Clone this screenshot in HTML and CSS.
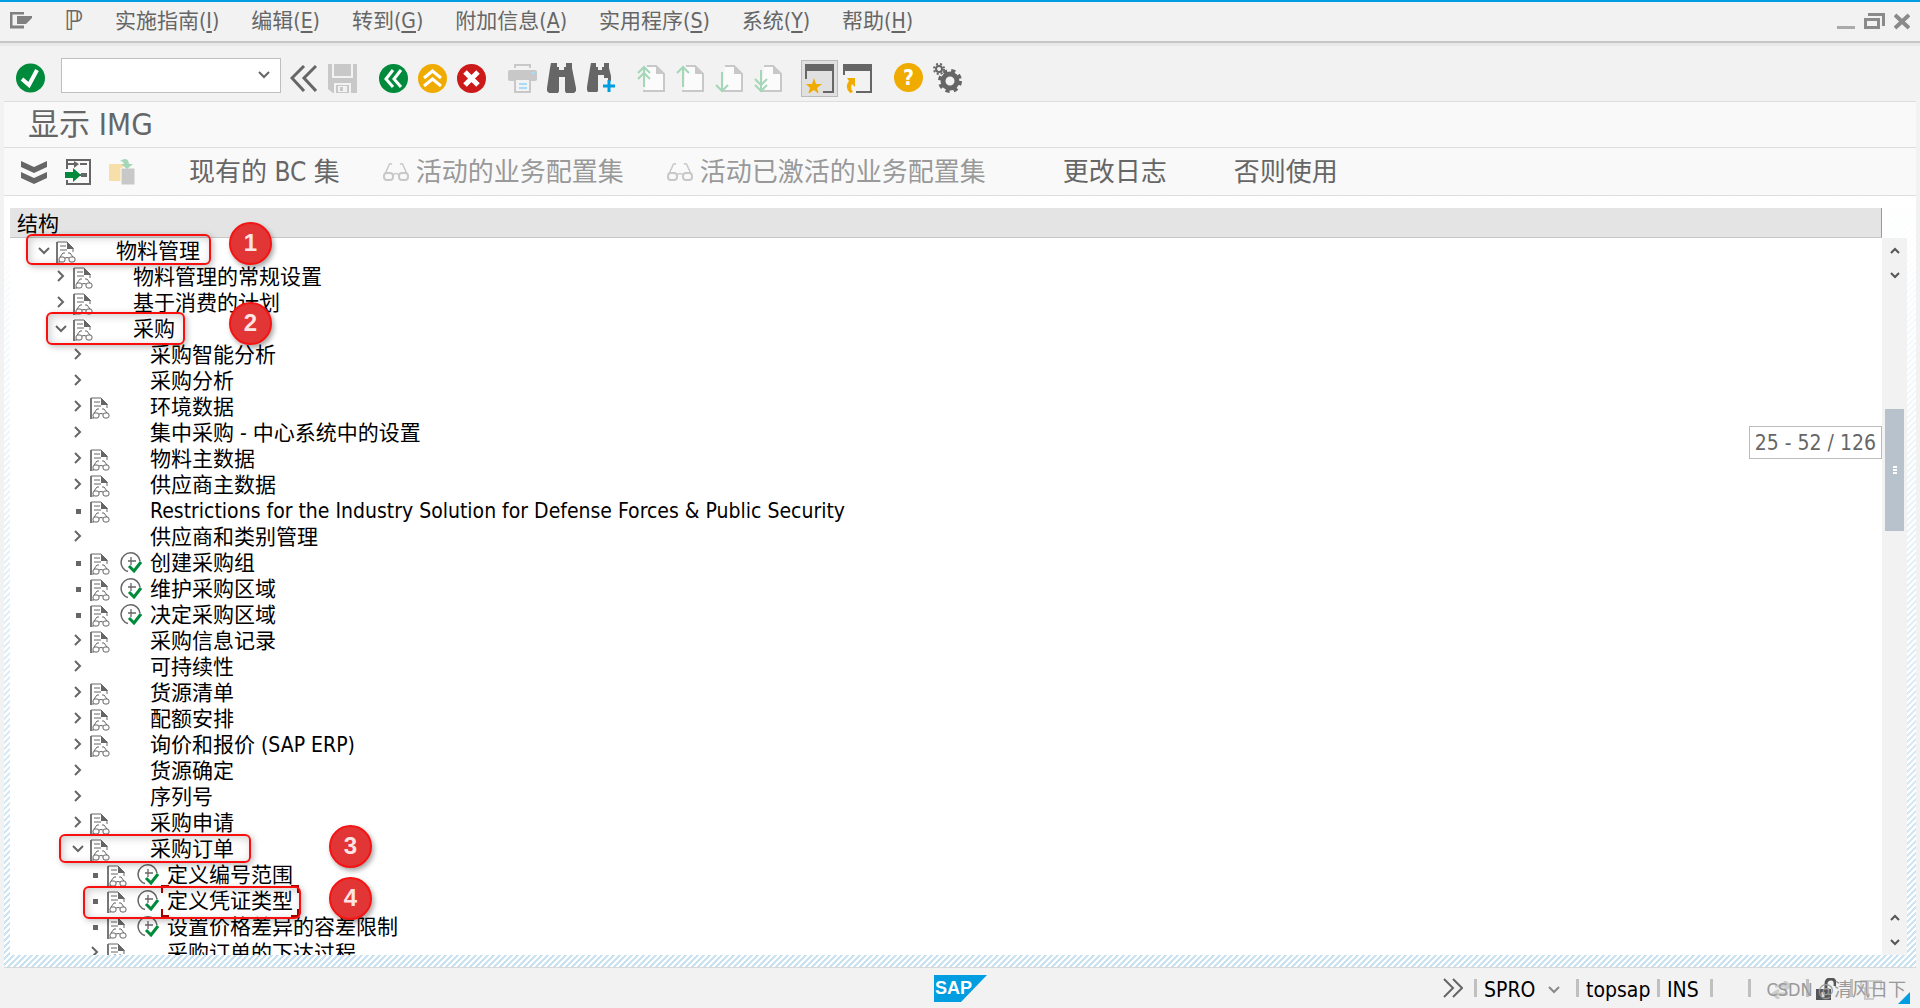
FILE: index.html
```html
<!doctype html>
<html lang="zh-CN">
<head>
  <meta charset="UTF-8">
  <title>显示 IMG</title>
  <link rel="stylesheet" href="styles.css">
</head>
<body>

  <!-- shared icons -->
  <svg class="sprite" width="0" height="0">
    <symbol id="right" viewBox="0 0 20 20"><path d="M7 4l5 5-5 5" fill="none" stroke="#666" stroke-width="2"/></symbol>
    <symbol id="down" viewBox="0 0 20 20"><path d="M5 7l5 5 5-5" fill="none" stroke="#666" stroke-width="2"/></symbol>
    <symbol id="dot" viewBox="0 0 20 20"><path d="M8 8h5v5h-5z" fill="#666"/></symbol>
    <symbol id="doc" viewBox="0 0 20 22">
      <path d="M1 1h10l6 6v4M1 21h3M4 5h6M4 9h7M7 12l-3 4M9 12H7M14 12l3 4M12 12h2" fill="none" stroke="#666"/>
      <path d="M11 1v7h7z" fill="#666"/>
      <path d="M1 1v21" stroke="#777" stroke-width="2"/>
      <rect x="3" y="16" width="6" height="5" rx="2" fill="#fff" stroke="#666"/>
      <rect x="13" y="16" width="6" height="5" rx="2" fill="#fff" stroke="#666"/>
      <path d="M9 17q2-1 4 0" fill="none" stroke="#666"/>
    </symbol>
    <symbol id="exec" viewBox="0 0 22 22">
      <path d="M8 19.500A9.500 9.500 0 1 1 20 9" fill="none" stroke="#666" stroke-width="1.500"/>
      <path d="M11 5v8M8 9h8" fill="none" stroke="#666" stroke-width="1.300"/>
      <path d="M9 14l5 5 7-9" fill="none" stroke="#008a3b" stroke-width="3"/>
    </symbol>
    <symbol id="glasses" viewBox="0 0 26 22">
      <rect x="1" y="12" width="9" height="7" rx="3" fill="none" stroke="#c8c8c8" stroke-width="2"/>
      <rect x="16" y="12" width="9" height="7" rx="3" fill="none" stroke="#c8c8c8" stroke-width="2"/>
      <path d="M10 14q3-3 6 0M2 13L6 4q1-2 3-1M24 13L20 4q-1-2-3-1" fill="none" stroke="#c8c8c8" stroke-width="1.500"/>
    </symbol>
    <symbol id="page" viewBox="0 0 29 29">
      <path d="M10 2h10l7 7v18H8z" fill="#fbfbfb"/>
      <path d="M10 2h9l8 8v17H6" fill="none" stroke="#c8c8c8" stroke-width="2"/>
      <path d="M19 1l9 9h-9z" fill="#c8c8c8"/>
    </symbol>
  </svg>

  <nav class="menubar">
    <button class="icon" title="系统菜单"><svg width="22" height="17"><path d="M14 1H1v14h13" fill="none" stroke="#808080" stroke-width="3"/><path d="M7 4h15v2l-6 6H7z" fill="#808080"/></svg></button>
    <a class="program" href="#">ℙ</a>
    <a href="#">实施指南(<u>I</u>)</a>
    <a href="#">编辑(<u>E</u>)</a>
    <a href="#">转到(<u>G</u>)</a>
    <a href="#">附加信息(<u>A</u>)</a>
    <a href="#">实用程序(<u>S</u>)</a>
    <a href="#">系统(<u>Y</u>)</a>
    <a href="#">帮助(<u>H</u>)</a>
    <div class="windowButtons">
      <button class="icon" title="最小化"><svg width="18" height="18"><path d="M0 15.500h18" stroke="#aaa" stroke-width="3"/></svg></button>
      <button class="icon" title="还原"><svg width="21" height="18" fill="none" stroke="#8a8a8a" stroke-width="3"><path d="M1.500 7.500h13v8h-13zM4 2.500h15.500V14"/></svg></button>
      <button class="icon" title="关闭"><svg width="16" height="18"><path d="M1 3l14 13M15 3L1 16" stroke="#8a8a8a" stroke-width="4"/></svg></button>
    </div>
  </nav>

  <div class="window">

    <div class="toolbar">
      <button class="icon" title="回车"><svg width="29" height="30"><circle cx="14.500" cy="15" r="14.500" fill="#008a3b"/><path d="M6 16l7 6 8-15" fill="none" stroke="#fff" stroke-width="4"/></svg></button>
      <div class="command">
        <input type="text" aria-label="命令">
        <button class="icon" title="历史"><svg width="12" height="8"><path d="M1 1l5 5 5-5" fill="none" stroke="#666" stroke-width="2"/></svg></button>
      </div>
      <button class="icon" title="隐藏"><svg width="27" height="27" fill="none" stroke="#666" stroke-width="3"><path d="M14 1L2 13l12 13M26 1L14 13l12 13"/></svg></button>
      <button class="icon save" title="保存"><svg width="29" height="29"><path d="M0 0h29v29H5l-5-4z" fill="#c8c8c8"/><path d="M5 0v13h19V0" fill="none" stroke="#f2f2f2" stroke-width="2"/><path d="M6 19h17v10H6z" fill="#f2f2f2"/><path d="M8 21h13v8H8z" fill="#c8c8c8"/><path d="M10 22h9v6h-9z" fill="#f2f2f2"/><path d="M12 23h3v4h-3z" fill="#c8c8c8"/></svg></button>

      <div class="group">
        <button class="icon" title="返回"><svg width="29" height="29"><circle cx="14.500" cy="14.500" r="14.500" fill="#008a3b"/><path d="M14 6l-7 9 7 8M22 6l-7 9 7 8" fill="none" stroke="#fff" stroke-width="3"/></svg></button>
        <button class="icon" title="退出"><svg width="29" height="29"><circle cx="14.500" cy="14.500" r="14.500" fill="#f0ab00"/><path d="M6 14l8.500-7 8.500 7M6 22l8.500-7 8.500 7" fill="none" stroke="#fff" stroke-width="3"/></svg></button>
        <button class="icon" title="取消"><svg width="29" height="29"><circle cx="14.500" cy="14.500" r="14.500" fill="#cc1919"/><path d="M8 8l13 13M21 8L8 21" stroke="#fff" stroke-width="5"/></svg></button>
      </div>

      <div class="group">
        <button class="icon" title="打印"><svg width="29" height="29"><path d="M7 4V1h15v3" fill="none" stroke="#c8c8c8" stroke-width="2"/><rect y="6" width="29" height="11" rx="2" fill="#c8c8c8"/><path d="M23 9h4" stroke="#a6dcf5" stroke-width="2"/><path d="M7 15h15v13H7z" fill="#f2f2f2" stroke="#c8c8c8" stroke-width="2"/><path d="M11 20h8M11 24h8" stroke="#a6dcf5" stroke-width="2"/></svg></button>
        <button class="icon" title="查找"><svg width="29" height="30" fill="#666"><path d="M4 0h6v4h2v3h5V4h2V0h6v5l4 20v3l-2 2h-8l-1-2V14h-6v14l-1 2H2l-2-2v-3L3 5z"/></svg></button>
        <button class="icon" title="查找下一个"><svg width="29" height="30" fill="#666"><path d="M5 0h5v4h2v3h4V4h2V0h5v5l2 8v5h-3v-3h-4v-3h-6v16l-1 1H2l-1-2v-3L4 5z"/><path d="M17 23h12M23 17v12" stroke="#009de0" stroke-width="3"/></svg></button>
      </div>

      <div class="group">
        <button class="icon" title="第一页"><svg width="29" height="29"><use href="#page"/><path d="M7 23V3M1 9l6-6 6 6M1 15l6-6 6 6" fill="none" stroke="#a5d6b8" stroke-width="2"/></svg></button>
        <button class="icon" title="上一页"><svg width="29" height="29"><use href="#page"/><path d="M7 23V3M1 9l6-6 6 6" fill="none" stroke="#a5d6b8" stroke-width="2"/></svg></button>
        <button class="icon" title="下一页"><svg width="29" height="29"><use href="#page"/><path d="M7 8v19M1 21l6 6 6-6" fill="none" stroke="#a5d6b8" stroke-width="2"/></svg></button>
        <button class="icon" title="最后一页"><svg width="29" height="29"><use href="#page"/><path d="M7 6v21M1 21l6 6 6-6M1 15l6 6 6-6" fill="none" stroke="#a5d6b8" stroke-width="2"/></svg></button>
      </div>

      <div class="sessions">
        <button class="icon pressed" title="新建会话"><svg width="29" height="29"><path d="M0 0h29v7H0z" fill="#666"/><path d="M1 6v9M28 6v22H18" fill="none" stroke="#666" stroke-width="2"/><path d="M9 14l2 6h6l-5 4 2 6-5-4-6 4 2-6-4-4h6z" fill="#f0ab00"/></svg></button>
        <button class="icon" title="生成快捷方式"><svg width="29" height="29"><path d="M0 0h29v7H0z" fill="#666"/><path d="M1 6v5M28 6v22H13" fill="none" stroke="#666" stroke-width="2"/><path d="M4 14h8v9l-3-3q-2 4 1 8l-3 1q-6-6-1-12z" fill="#f0ab00"/></svg></button>
      </div>

      <div class="group">
        <button class="icon help" title="帮助">?</button>
        <button class="icon" title="定制"><svg width="30" height="30" fill="none" stroke="#666"><circle cx="17" cy="18" r="7" stroke-width="5"/><circle cx="17" cy="18" r="10" stroke-width="4" stroke-dasharray="4 4"/><circle cx="6" cy="6" r="3" stroke-width="2"/><circle cx="6" cy="6" r="5" stroke-width="2" stroke-dasharray="2 2"/></svg></button>
      </div>
    </div>

    <h1 class="title">显示 IMG</h1>

    <div class="appbar">
      <button class="icon" title="展开"><svg width="28" height="24" fill="#666"><path d="M1 1l13 6 13-6v6l-13 6L1 7zM1 12l13 6 13-6v6l-13 6-13-6z"/></svg></button>
      <button class="icon" title="定位"><svg width="27" height="26"><path d="M2 10V1h23v24H2v-4" fill="none" stroke="#666" stroke-width="2"/><path d="M2 5h10M15 5h7M15 16h7" stroke="#666" stroke-width="2"/><path d="M9 2l5 3-5 4z" fill="#666"/><path d="M0 13h8V9l8 7-8 7v-4H0z" fill="#008a3b"/><path d="M16 14h6v4h-6z" fill="#666"/></svg></button>
      <button class="icon" title="复制"><svg width="27" height="27"><path d="M0 6h14v17H0z" fill="#f7dfa9"/><path d="M12 10h14v17H12z" fill="#c8c8c8" stroke="#f9f9f9"/><path d="M11 3q8-5 9 3h4l-6 5-6-5h3q-1-3-4-3z" fill="#a5d6b8"/></svg></button>
      <button class="action first">现有的 BC 集</button>
      <button class="action" disabled><svg width="26" height="22"><use href="#glasses"/></svg>活动的业务配置集</button>
      <button class="action" disabled><svg width="26" height="22"><use href="#glasses"/></svg>活动已激活的业务配置集</button>
      <button class="action log">更改日志</button>
      <button class="action usage">否则使用</button>
    </div>

    <main class="content">
      <div class="structure">
        <h2 class="treeHead">结构</h2>
        <div class="treePane">
          <ul class="tree" id="tree"></ul>
          <output class="range">25 - 52 / 126</output>
        </div>
      </div>
      <div class="scrollbar">
        <button class="icon" title="向上"><svg width="10" height="7"><path d="M1 6l4-4 4 4" fill="none" stroke="#555" stroke-width="2"/></svg></button>
        <button class="icon" title="向下"><svg width="10" height="7"><path d="M1 1l4 4 4-4" fill="none" stroke="#555" stroke-width="2"/></svg></button>
        <div class="before"></div>
        <div class="thumb"><i></i><i></i><i></i></div>
        <div class="after"></div>
        <button class="icon" title="向上"><svg width="10" height="7"><path d="M1 6l4-4 4 4" fill="none" stroke="#555" stroke-width="2"/></svg></button>
        <button class="icon" title="向下"><svg width="10" height="7"><path d="M1 1l4 4 4-4" fill="none" stroke="#555" stroke-width="2"/></svg></button>
      </div>

      <!-- step markers drawn over the tree -->
      <div class="mark mark1"></div><span class="step step1">1</span>
      <div class="mark mark2"></div><span class="step step2">2</span>
      <div class="mark mark3"></div><span class="step step3">3</span>
      <div class="mark mark4"></div><span class="step step4">4</span>
    </main>
  </div>

  <footer class="statusbar">
    <svg class="logo" width="53" height="27" viewBox="0 0 53 27"><path d="M0 0h53L27 27H0z" fill="#009de0"/><text x="1" y="19">SAP</text></svg>
    <div class="status">
      <button class="icon" title="显示"><svg width="20" height="20" fill="none" stroke="#666" stroke-width="2"><path d="M1 1l9 9-9 9M10 1l9 9-9 9"/></svg></button>
      <span class="cell system">SPRO <svg width="12" height="8"><path d="M1 1l5 5 5-5" fill="none" stroke="#888" stroke-width="2"/></svg></span>
      <span class="cell server">topsap</span>
      <span class="cell mode">INS</span>
      <span class="cell blank"></span>
      <span class="cell transfer"><svg width="20" height="18" fill="none" stroke="#ccc" stroke-width="3"><path d="M4 5h15M13 0l6 5-6 4M17 13H2M8 9l-6 4 6 5"/></svg></span>
      <span class="cell lock"><svg width="20" height="23"><path d="M0 11h15v11H0z" fill="#555"/><path d="M10 11V6q0-5 5-5t4 7" fill="none" stroke="#555" stroke-width="3"/><path d="M7 14v5" stroke="#ddd" stroke-width="3"/></svg></span>
      <span class="cell"><svg width="22" height="20" fill="none" stroke="#ccc" stroke-width="2"><path d="M1 1h14v7H1zM5 8v11h9M8 1v18M15 1h6v9"/></svg></span>
    </div>
    <span class="watermark">CSDN @清风日下</span>
    <span class="grip"></span>
  </footer>

  <script>
    // level, marker, document icon, activity icon, text
    var rows = [
      [0, 'down', 1, 0, '物料管理'],
      [1, 'right', 1, 0, '物料管理的常规设置'],
      [1, 'right', 1, 0, '基于消费的计划'],
      [1, 'down', 1, 0, '采购'],
      [2, 'right', 0, 0, '采购智能分析'],
      [2, 'right', 0, 0, '采购分析'],
      [2, 'right', 1, 0, '环境数据'],
      [2, 'right', 0, 0, '集中采购 - 中心系统中的设置'],
      [2, 'right', 1, 0, '物料主数据'],
      [2, 'right', 1, 0, '供应商主数据'],
      [2, 'dot', 1, 0, 'Restrictions for the Industry Solution for Defense Forces &amp; Public Security'],
      [2, 'right', 0, 0, '供应商和类别管理'],
      [2, 'dot', 1, 1, '创建采购组'],
      [2, 'dot', 1, 1, '维护采购区域'],
      [2, 'dot', 1, 1, '决定采购区域'],
      [2, 'right', 1, 0, '采购信息记录'],
      [2, 'right', 0, 0, '可持续性'],
      [2, 'right', 1, 0, '货源清单'],
      [2, 'right', 1, 0, '配额安排'],
      [2, 'right', 1, 0, '询价和报价 (SAP ERP)'],
      [2, 'right', 0, 0, '货源确定'],
      [2, 'right', 0, 0, '序列号'],
      [2, 'right', 1, 0, '采购申请'],
      [2, 'down', 1, 0, '采购订单'],
      [3, 'dot', 1, 1, '定义编号范围'],
      [3, 'dot', 1, 1, '定义凭证类型', 'selected'],
      [3, 'dot', 1, 1, '设置价格差异的容差限制'],
      [3, 'right', 1, 0, '采购订单的下达过程']
    ];

    function icon(name, cls) {
      return '<svg class="' + cls + '">' + (name ? '<use href="#' + name + '"/>' : '') + '</svg>';
    }

    document.getElementById('tree').innerHTML = rows.map(function(r) {
      return '<li class="level' + r[0] + '">' + icon(r[1], 'marker') + icon(r[2] && 'doc', 'doc') +
        icon(r[3] && 'exec', 'exec') + '<span class="' + (r[5] || 'label') + '">' + r[4] + '</span></li>';
    }).join('');
  </script>

</body>
</html>
```

FILE: styles.css
```css
* {
  box-sizing: border-box;
}

html, body {
  height: 100%;
  margin: 0;
}

body {
  display: flex;
  flex-direction: column;
  overflow: hidden;
  background: #f2f2f2;
  color: #000;
  font-family: "DejaVu Sans Condensed", "Noto Sans CJK SC", sans-serif;
  font-size: 21px;
  line-height: 26px;
}

svg {
  display: block;
  flex: none;
}

.sprite {
  position: absolute;
}

button {
  font: inherit;
  color: inherit;
  border: 0;
  padding: 0;
  background: none;
}

.icon {
  flex: none;
  display: flex;
  align-items: center;
  justify-content: center;
}

/* menu */
.menubar {
  display: flex;
  align-items: center;
  height: 46px;
  padding: 0 10px 7px;
  gap: 32px;
  border-top: 2px solid #009de0;
  background: linear-gradient(#f2f2f2 39px, #c6c6c6 39px, #c6c6c6 41px, #e9e9e9 41px);
}

.menubar a {
  color: #666;
  text-decoration: none;
  white-space: nowrap;
}

.menubar u {
  text-underline-offset: 3px;
}

.menubar .program {
  font-family: "DejaVu Sans", sans-serif;
  font-size: 27px;
}

.windowButtons {
  display: flex;
  gap: 9px;
  margin-left: auto;
}

.window {
  flex: 1;
  min-height: 0;
  display: flex;
  flex-direction: column;
  margin: 0 4px;
}

/* system toolbar */
.toolbar {
  display: flex;
  align-items: center;
  height: 56px;
  padding: 9px 12px 0;
  border-bottom: 1px solid #dedede;
}

.command {
  display: flex;
  align-items: center;
  width: 220px;
  height: 35px;
  margin: -6px 9px 0 16px;
  padding-right: 10px;
  background: #fff;
  border: 1px solid #bfbfbf;
}

.command input {
  flex: 1;
  min-width: 0;
  border: 0;
  outline: 0;
  font: inherit;
  background: none;
}

.save {
  margin-left: 11px;
}

.group {
  display: flex;
  gap: 10px;
  margin-left: 22px;
}

.sessions {
  display: flex;
  align-items: center;
  gap: 5px;
  margin-left: 18px;
}

.pressed {
  width: 37px;
  height: 37px;
  background: #e0e0e0;
  border: 1px solid #bbb;
}

.help {
  width: 29px;
  height: 29px;
  border-radius: 50%;
  background: #f0ab00;
  color: #fff;
  font-weight: bold;
}

.title {
  height: 46px;
  margin: 0;
  padding: 0 24px;
  background: #f9f9f9;
  border-bottom: 1px solid #dedede;
  color: #666;
  font-size: 31px;
  font-weight: normal;
  line-height: 45px;
}

/* application toolbar */
.appbar {
  display: flex;
  align-items: center;
  height: 48px;
  padding: 0 16px;
  gap: 17px;
  background: #f9f9f9;
  border-bottom: 1px solid #dedede;
  color: #666;
}

.action {
  display: flex;
  align-items: center;
  gap: 7px;
  margin-right: 26px;
  font-size: 26px;
  white-space: nowrap;
}

.action:disabled {
  color: #999;
}

.first {
  margin-left: 36px;
}

.log {
  margin-left: 34px;
}

.usage {
  margin-left: 24px;
}

/* tree */
.content {
  position: relative;
  flex: 1;
  min-height: 0;
  display: flex;
  padding: 12px 9px 12px 6px;
  border-bottom: 1px solid #d8d8d8;
  background:
    linear-gradient(#fff, rgba(255, 255, 255, 0)),
    linear-gradient(135deg, #c9e2f2 25%, #fff 25%, #fff 50%, #c9e2f2 50%, #c9e2f2 75%, #fff 75%) 0 0 / 6px 6px;
}

.structure {
  flex: 1;
  min-width: 0;
  display: flex;
  flex-direction: column;
}

.treeHead {
  height: 30px;
  margin: 0;
  padding: 3px 7px 0;
  background: #e4e4e4;
  border-right: 1px solid #999;
  border-bottom: 1px solid #c6c6c6;
  font-size: 21px;
  font-weight: normal;
}

.treePane {
  position: relative;
  flex: 1;
  min-height: 0;
  overflow: hidden;
  background: #fff;
}

.tree {
  margin: 0;
  padding: 0;
  list-style: none;
}

.tree li {
  display: flex;
  align-items: center;
  height: 26px;
  white-space: nowrap;
}

.tree .level0 { padding-left: 24px; }
.tree .level1 { padding-left: 41px; }
.tree .level2 { padding-left: 58px; }
.tree .level3 { padding-left: 75px; }

.marker {
  width: 20px;
  height: 20px;
}

.doc {
  width: 20px;
  height: 22px;
  margin: 2px 10px 0 2px;
}

.exec {
  width: 22px;
  height: 22px;
  margin-right: 8px;
}

/* corner brackets round the cursor row */
.selected {
  --c: linear-gradient(#a00, #a00);
  margin: 0 -6px;
  padding: 3px 6px;
  background:
    var(--c) 0 0 / 8px 2px, var(--c) 0 0 / 2px 8px,
    var(--c) 100% 0 / 8px 2px, var(--c) 100% 0 / 2px 8px,
    var(--c) 0 100% / 8px 2px, var(--c) 0 100% / 2px 8px,
    var(--c) 100% 100% / 8px 2px, var(--c) 100% 100% / 2px 8px;
  background-repeat: no-repeat;
}

.range {
  position: absolute;
  top: 188px;
  right: 0;
  padding: 3px 5px 2px;
  background: #fff;
  border: 1px solid #bbb;
  color: #666;
}

.scrollbar {
  display: flex;
  flex-direction: column;
  width: 25px;
  margin-top: 30px;
  background: #f2f2f2;
}

.scrollbar .icon {
  height: 25px;
}

.before {
  flex: 121;
}

.thumb {
  flex: 122;
  display: flex;
  flex-direction: column;
  align-items: center;
  justify-content: center;
  gap: 1px;
  margin: 0 3px;
  background: #b8c2cc;
}

.thumb i {
  width: 4px;
  height: 2px;
  background: #fff;
}

.after {
  flex: 374;
}

/* step markers */
.mark {
  position: absolute;
  border: 2px solid #fa0f0f;
  border-radius: 6px;
  box-shadow: 2px 2px 6px rgba(0, 0, 0, .25), inset 2px 2px 8px rgba(0, 0, 0, .2);
}

.mark1 { left: 22px; top: 38px; width: 185px; height: 31px; }
.mark2 { left: 42px; top: 116px; width: 139px; height: 33px; }
.mark3 { left: 55px; top: 638px; width: 192px; height: 29px; }
.mark4 { left: 79px; top: 690px; width: 218px; height: 33px; }

.step {
  position: absolute;
  width: 43px;
  height: 43px;
  border: 2px solid #f51414;
  border-radius: 50%;
  background: #e23535;
  box-shadow: 2px 3px 5px rgba(0, 0, 0, .35);
  color: #fde4e4;
  font-family: "Liberation Sans", sans-serif;
  font-size: 24px;
  font-weight: bold;
  line-height: 38px;
  text-align: center;
}

.step1 { left: 225px; top: 26px; }
.step2 { left: 225px; top: 106px; }
.step3 { left: 325px; top: 629px; }
.step4 { left: 325px; top: 681px; }

/* status bar */
.statusbar {
  position: relative;
  display: flex;
  align-items: center;
  justify-content: center;
  height: 40px;
}

.logo text {
  fill: #fff;
  font: bold 18px "Liberation Sans", sans-serif;
}

.status {
  position: absolute;
  right: 0;
  display: flex;
  align-items: center;
  width: 477px;
}

.status .icon {
  margin-right: 11px;
}

.cell {
  display: flex;
  align-items: center;
  gap: 13px;
  height: 18px;
  padding: 3px 0 0 7px;
  border-left: 3px solid #c0c0c0;
}

.system { width: 102px; }
.server { width: 81px; }
.mode { width: 53px; }
.blank { width: 38px; }
.transfer { width: 58px; padding-left: 20px; }
.lock { width: 44px; }

.watermark {
  position: absolute;
  right: 14px;
  padding-top: 3px;
  color: #999;
  font-size: 18px;
}

.grip {
  position: absolute;
  right: 10px;
  bottom: 4px;
  border: 6px solid transparent;
  border-right-color: #009de0;
  border-bottom-color: #009de0;
}
```
